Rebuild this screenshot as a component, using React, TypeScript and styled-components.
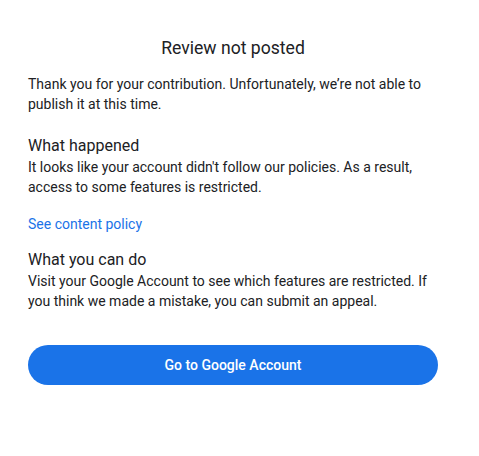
import styled, { createGlobalStyle } from "styled-components";

const GlobalStyle = createGlobalStyle`
    body {
        margin: 0;
        background: #ffffff;
        font-family: Roboto, "Liberation Sans", Arial, sans-serif;
        color: #202124;
    }
`;

export default function App() {
    return (
        <>
            <GlobalStyle />
            <Dialog>
                <Title>Review not posted</Title>
                <Text>
                    Thank you for your contribution. Unfortunately, we’re not
                    able to publish it at this time.
                </Text>
                <Section $gap={22}>
                    <Heading>What happened</Heading>
                    <Text>
                        It looks like your account didn't follow our policies.
                        As a result, access to some features is restricted.
                    </Text>
                </Section>
                <PolicyLink href="#">See content policy</PolicyLink>
                <Section $gap={16}>
                    <Heading>What you can do</Heading>
                    <Text>
                        Visit your Google Account to see which features are
                        restricted. If you think we made a mistake, you can
                        submit an appeal.
                    </Text>
                </Section>
                <AccountButton>Go to Google Account</AccountButton>
            </Dialog>
        </>
    );
}

const Dialog = styled.div`
    display: flex;
    flex-direction: column;
    width: 410px;
    padding: 36px 28px 0;
`;

const Title = styled.h1`
    margin: 0 0 14px;
    text-align: center;
    font-size: 17.6px;
    font-weight: 400;
    line-height: 24px;
    color: #202124;
`;

const Section = styled.div<{ $gap: number }>`
    display: flex;
    flex-direction: column;
    margin-top: ${({ $gap }) => $gap}px;
`;

const Heading = styled.h2`
    margin: 0 0 1px;
    font-size: 16px;
    font-weight: 400;
    line-height: 20px;
    color: #202124;
`;

const Text = styled.p`
    margin: 0;
    font-size: 14px;
    line-height: 20px;
    color: #202124;
`;

const PolicyLink = styled.a`
    align-self: flex-start;
    margin-top: 17px;
    font-size: 14px;
    line-height: 20px;
    color: #1a73e8;
    text-decoration: none;
`;

const AccountButton = styled.button`
    all: unset;
    box-sizing: border-box;
    margin-top: 34px;
    height: 40px;
    border-radius: 20px;
    background: #1a73e8;
    color: #ffffff;
    font-family: Roboto, "Liberation Sans", Arial, sans-serif;
    font-size: 14px;
    font-weight: 500;
    text-align: center;
    line-height: 40px;
`;
